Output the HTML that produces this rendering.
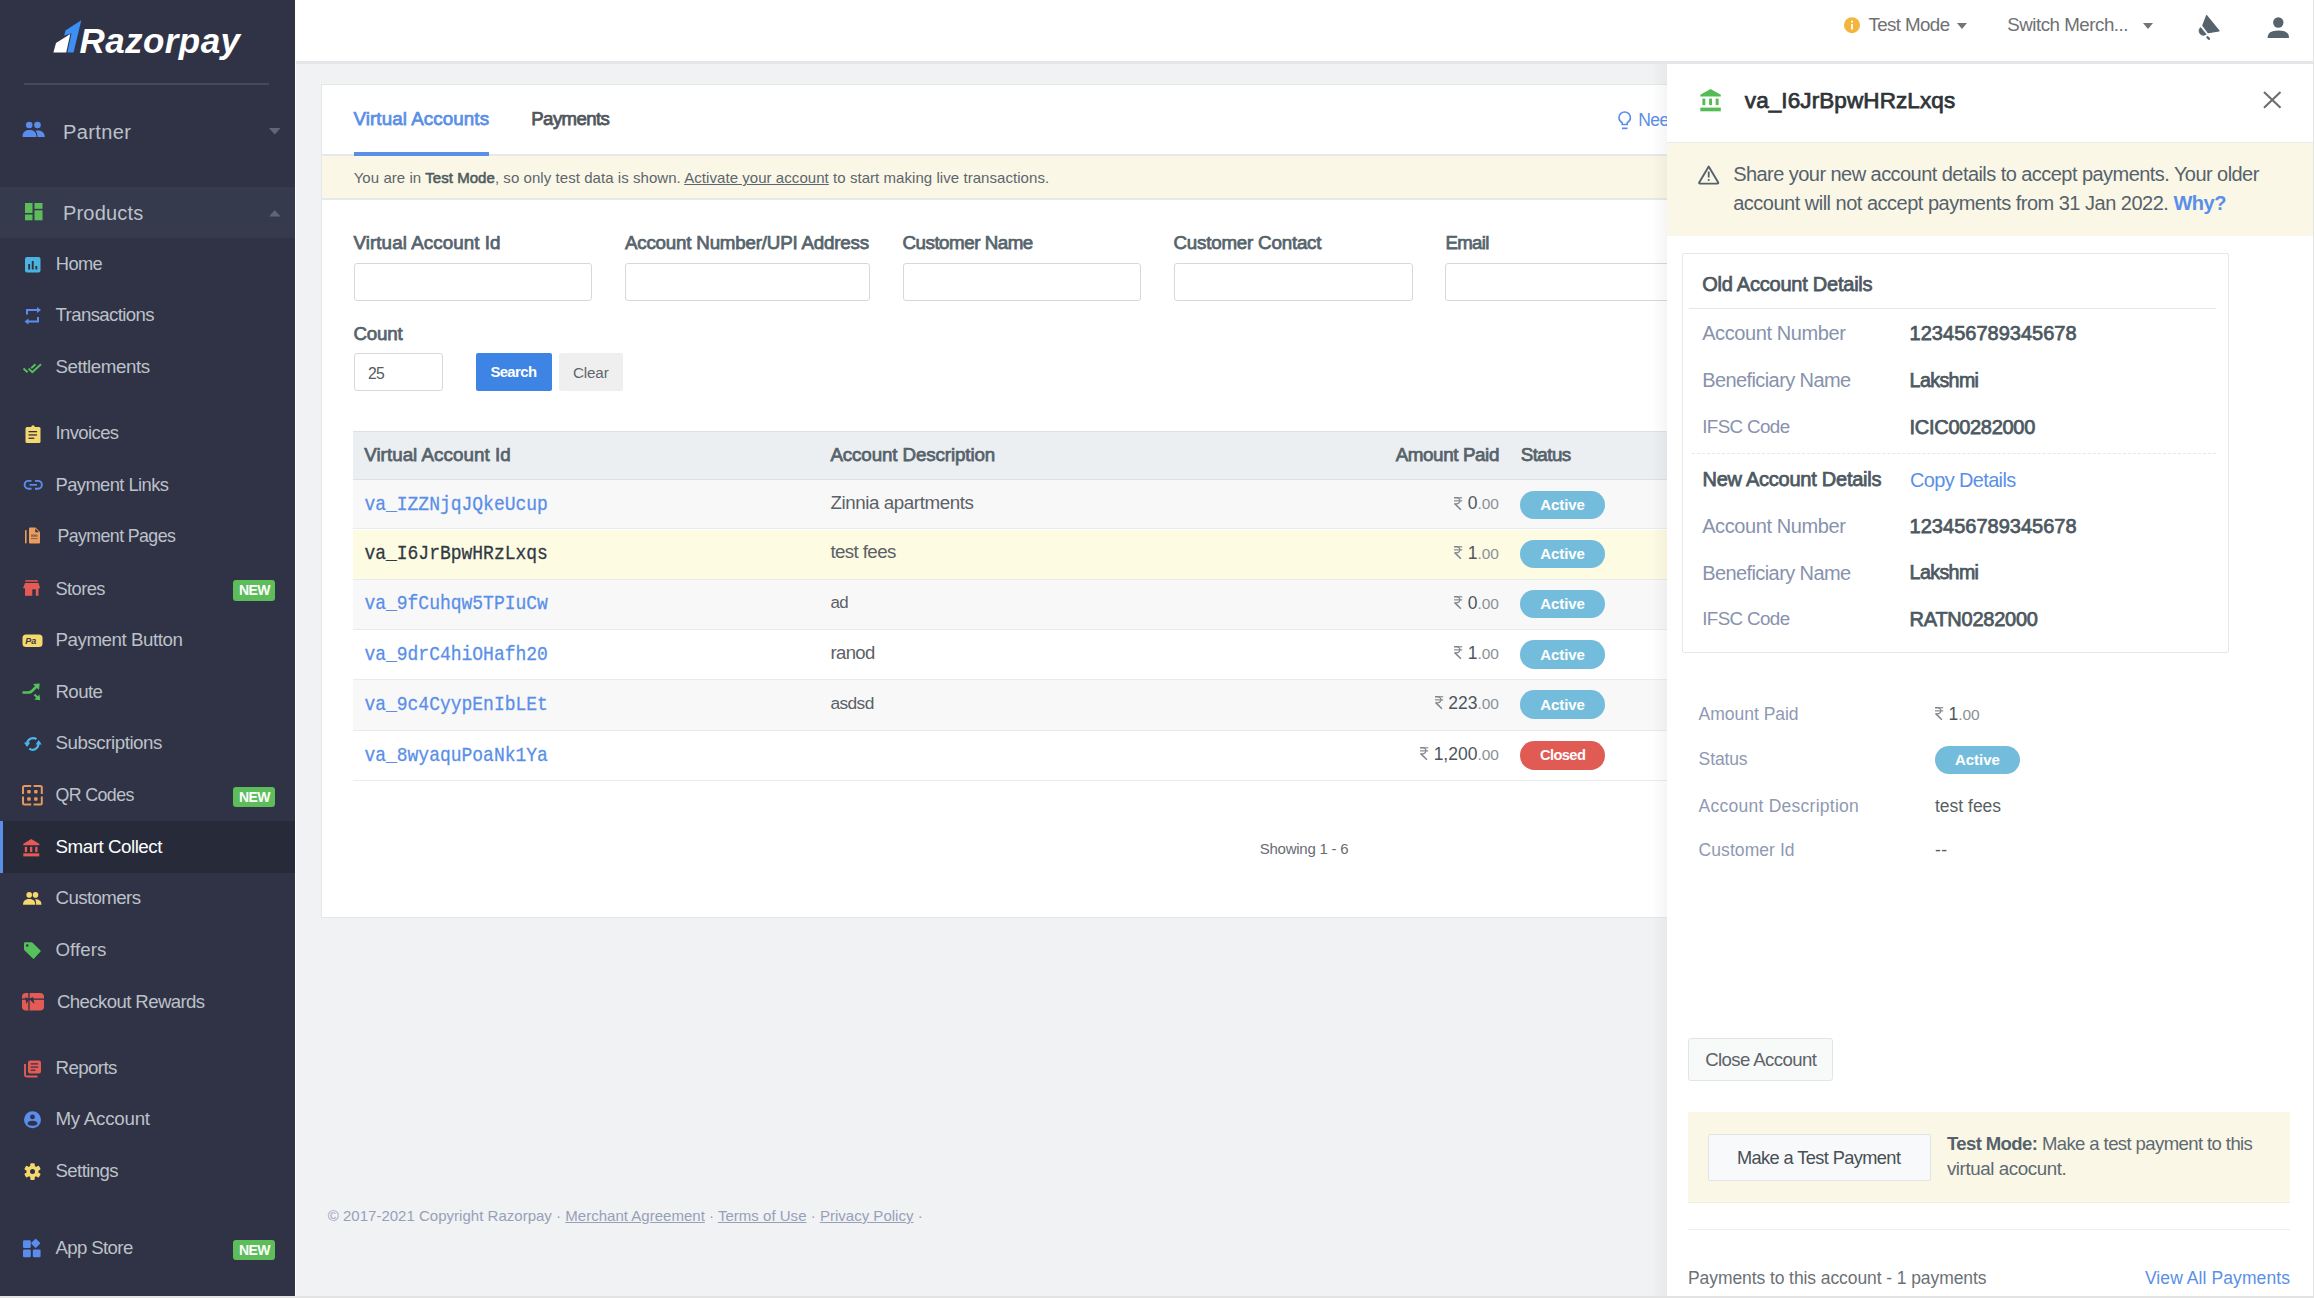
<!DOCTYPE html>
<html><head><meta charset="utf-8"><title>Razorpay Smart Collect</title>
<style>
html,body{margin:0;padding:0}
body{width:2314px;height:1298px;overflow:hidden;position:relative;background:#f0f2f4;font-family:"Liberation Sans",sans-serif}
div,span{box-sizing:border-box}
svg{overflow:visible}
</style></head><body>
<div style="position:absolute;left:0px;top:0px;width:295px;height:1298px;background:#2f3345;"></div>
<div style="position:absolute;left:295px;top:0px;width:1px;height:1298px;background:#ffffff;"></div>
<svg style="position:absolute;left:0px;top:0px" width="295" height="70" viewBox="0 0 295 70"><polygon points="53.4,52.6 56,43 70.3,34 66.2,52.6" fill="#ffffff"/><polygon points="64.2,35.7 65.4,30.4 81.3,20.2 73.6,52.6 67.3,52.6 71.5,33.2" fill="#3b8ff5"/></svg>
<div id="t0" style="position:absolute;left:79.5px;top:22.77px;font-family:'Liberation Sans', sans-serif;font-size:35px;line-height:35px;font-weight:700;color:#ffffff;white-space:nowrap;letter-spacing:0.420px;font-style:italic;"><span id="s0">Razorpay</span></div>
<div style="position:absolute;left:24px;top:83px;width:245px;height:2px;background:#444a5c;"></div>
<svg style="position:absolute;left:22px;top:121px" width="24" height="17" viewBox="0 0 24 17"><circle cx="7.2" cy="4" r="3.3" fill="#5a8dee"/><circle cx="15.5" cy="4" r="3.3" fill="#5a8dee"/><path d="M0.5 16 C0.5 10.5 4 9 7.5 9 C11 9 14.5 10.5 14.5 16 Z" fill="#5a8dee"/><path d="M15.5 16 C15.5 13 14.8 11.2 13.5 9.8 C17.5 9 22.8 10.5 22.8 16 Z" fill="#5a8dee"/></svg>
<div id="t1" style="position:absolute;left:62.9px;top:121.97px;font-family:'Liberation Sans', sans-serif;font-size:20px;line-height:20px;font-weight:400;color:#bdc1c9;white-space:nowrap;letter-spacing:0.401px;"><span id="s1">Partner</span></div>
<svg style="position:absolute;left:269px;top:128px" width="12" height="7" viewBox="0 0 12 7"><polygon points="0,0 11.5,0 5.75,6.5" fill="#5e6873"/></svg>
<div style="position:absolute;left:0px;top:186.5px;width:295px;height:51.5px;background:#353a4c;"></div>
<svg style="position:absolute;left:25px;top:203px" width="18" height="18" viewBox="0 0 18 18"><rect x="0" y="0" width="7.5" height="10" fill="#5cbd5a"/><rect x="0" y="11.5" width="7.5" height="5.8" fill="#5cbd5a"/><rect x="9.5" y="0" width="8" height="5.8" fill="#5cbd5a"/><rect x="9.5" y="7.3" width="8" height="10" fill="#5cbd5a"/></svg>
<div id="t2" style="position:absolute;left:62.9px;top:203.37px;font-family:'Liberation Sans', sans-serif;font-size:20px;line-height:20px;font-weight:400;color:#bdc1c9;white-space:nowrap;letter-spacing:0.209px;"><span id="s2">Products</span></div>
<svg style="position:absolute;left:269px;top:210px" width="12" height="7" viewBox="0 0 12 7"><polygon points="0,6.5 11.5,6.5 5.75,0" fill="#5e6873"/></svg>
<div style="position:absolute;left:0px;top:821.2px;width:295px;height:51.8px;background:#262a39;"></div>
<div style="position:absolute;left:0px;top:821.2px;width:3px;height:51.8px;background:#5a8fe8;"></div>
<svg style="position:absolute;left:25px;top:256.7px" width="16" height="16" viewBox="0 0 16 16"><rect x="0" y="0" width="15.5" height="15.5" rx="2" fill="#4bb3e0"/><rect x="3.2" y="7" width="1.9" height="5.5" fill="#2f3345"/><rect x="6.8" y="4" width="1.9" height="8.5" fill="#2f3345"/><rect x="10.4" y="9" width="1.9" height="3.5" fill="#2f3345"/></svg>
<div id="t3" style="position:absolute;left:55.8px;top:255.21px;font-family:'Liberation Sans', sans-serif;font-size:18.29px;line-height:18.29px;font-weight:400;color:#bdc1c9;white-space:nowrap;letter-spacing:-0.600px;"><span id="s3">Home</span></div>
<svg style="position:absolute;left:25px;top:308.1px" width="17" height="16" viewBox="0 0 17 16"><path d="M2 6.5 V2 H12.5" stroke="#5a8dee" stroke-width="2" fill="none"/><polygon points="12,-1 16,2 12,5" fill="#5a8dee"/><path d="M13 9 V13.5 H3" stroke="#5a8dee" stroke-width="2" fill="none"/><polygon points="3.5,10.5 -0.5,13.5 3.5,16.5" fill="#5a8dee"/></svg>
<div id="t4" style="position:absolute;left:55.5px;top:306.35px;font-family:'Liberation Sans', sans-serif;font-size:18.6px;line-height:18.6px;font-weight:400;color:#bdc1c9;white-space:nowrap;letter-spacing:-0.600px;"><span id="s4">Transactions</span></div>
<svg style="position:absolute;left:23px;top:363.1px" width="19" height="12" viewBox="0 0 19 12"><path d="M0.5 5.5 L4.6 9.2" stroke="#55c15a" stroke-width="1.9" fill="none"/><path d="M5.6 5.5 L9.3 9.2 L18 1.2" stroke="#55c15a" stroke-width="1.9" fill="none"/><path d="M8.2 5.2 L12.5 1.2" stroke="#55c15a" stroke-width="1.9" fill="none"/></svg>
<div id="t5" style="position:absolute;left:55.5px;top:358.22px;font-family:'Liberation Sans', sans-serif;font-size:18.75px;line-height:18.75px;font-weight:400;color:#bdc1c9;white-space:nowrap;letter-spacing:-0.442px;"><span id="s5">Settlements</span></div>
<svg style="position:absolute;left:25px;top:424.6px" width="17" height="18" viewBox="0 0 17 18"><rect x="0.5" y="2" width="15" height="16" rx="1.5" fill="#f5d86e"/><circle cx="8" cy="2" r="1.8" fill="#f5d86e"/><rect x="3.5" y="6" width="8.5" height="1.3" fill="#2f3345"/><rect x="3.5" y="9.3" width="8.5" height="1.3" fill="#2f3345"/><rect x="3.5" y="12.6" width="5.8" height="1.3" fill="#2f3345"/></svg>
<div id="t6" style="position:absolute;left:55.5px;top:423.95px;font-family:'Liberation Sans', sans-serif;font-size:18.48px;line-height:18.48px;font-weight:400;color:#bdc1c9;white-space:nowrap;letter-spacing:-0.600px;"><span id="s6">Invoices</span></div>
<svg style="position:absolute;left:24px;top:480.4px" width="19" height="11" viewBox="0 0 19 11"><path d="M7.5 0.9 H4.5 A3.9 3.9 0 0 0 4.5 8.7 H7.5 M11 0.9 H14 A3.9 3.9 0 0 1 14 8.7 H11" stroke="#5a8dee" stroke-width="1.9" fill="none"/><rect x="5.5" y="4" width="7.5" height="1.7" fill="#5a8dee"/></svg>
<div id="t7" style="position:absolute;left:55.5px;top:475.82px;font-family:'Liberation Sans', sans-serif;font-size:18.4px;line-height:18.4px;font-weight:400;color:#bdc1c9;white-space:nowrap;letter-spacing:-0.600px;"><span id="s7">Payment Links</span></div>
<svg style="position:absolute;left:25px;top:526.6px" width="17" height="18" viewBox="0 0 17 18"><rect x="0" y="3" width="1.6" height="13.5" rx="0.7" fill="#eb9c5d"/><path d="M4 1.5 Q4 0.5 5 0.5 H10.5 L15 5 V15.5 Q15 16.5 14 16.5 H5 Q4 16.5 4 15.5 Z" fill="#eb9c5d"/><polygon points="10.3,1.5 14,5.2 10.3,5.2" fill="#2f3345"/><rect x="6" y="7.5" width="6.5" height="2.3" fill="#8a6a55"/><rect x="6" y="11" width="6.5" height="1.1" fill="#8a6a55"/></svg>
<div id="t8" style="position:absolute;left:57.5px;top:528.03px;font-family:'Liberation Sans', sans-serif;font-size:17.8px;line-height:17.8px;font-weight:400;color:#bdc1c9;white-space:nowrap;letter-spacing:-0.600px;"><span id="s8">Payment Pages</span></div>
<svg style="position:absolute;left:23px;top:580.1px" width="19" height="17" viewBox="0 0 19 17"><rect x="2.3" y="0" width="12.5" height="1.8" fill="#c9524e"/><polygon points="2,3 15.5,3 17.2,8.3 0,8.3" fill="#e45a54"/><rect x="2" y="8" width="13.5" height="7.8" fill="#e45a54"/><rect x="9.3" y="9.3" width="3.5" height="6.8" fill="#2f3345"/></svg>
<div id="t9" style="position:absolute;left:55.5px;top:579.61px;font-family:'Liberation Sans', sans-serif;font-size:18.3px;line-height:18.3px;font-weight:400;color:#bdc1c9;white-space:nowrap;letter-spacing:-0.600px;"><span id="s9">Stores</span></div>
<div style="position:absolute;left:233.2px;top:580.1px;width:42.3px;height:20.5px;background:#5cbd5a;border-radius:3px;"></div>
<div id="t10" style="position:absolute;left:-145.65px;width:800px;text-align:center;top:583.45px;font-family:'Liberation Sans', sans-serif;font-size:14px;line-height:14px;font-weight:700;color:#ffffff;white-space:nowrap;letter-spacing:-0.586px;"><span id="s10">NEW</span></div>
<svg style="position:absolute;left:22px;top:633.9px" width="21" height="14" viewBox="0 0 21 14"><rect x="0.5" y="0.5" width="20" height="12.5" rx="3.5" fill="#f5d86e"/><text x="3.3" y="10" font-family="Liberation Sans" font-size="9" font-weight="700" font-style="italic" fill="#3a3a3a">Pa</text></svg>
<div id="t11" style="position:absolute;left:55.5px;top:630.52px;font-family:'Liberation Sans', sans-serif;font-size:18.75px;line-height:18.75px;font-weight:400;color:#bdc1c9;white-space:nowrap;letter-spacing:-0.456px;"><span id="s11">Payment Button</span></div>
<svg style="position:absolute;left:22px;top:683.5px" width="20" height="19" viewBox="0 0 20 19"><path d="M0.5 8.5 H6.5 Q8.5 8.5 10 7 L15.5 1.5" stroke="#55c15a" stroke-width="2.6" fill="none"/><polygon points="11,0 17.7,-0.5 17,6" fill="#55c15a"/><path d="M12.5 10.5 L15.5 13.5" stroke="#55c15a" stroke-width="2.2" fill="none"/><polygon points="12.3,15.5 18.2,16.3 17.5,10.5" fill="#55c15a"/></svg>
<div id="t12" style="position:absolute;left:55.5px;top:682.70px;font-family:'Liberation Sans', sans-serif;font-size:18.66px;line-height:18.66px;font-weight:400;color:#bdc1c9;white-space:nowrap;letter-spacing:-0.600px;"><span id="s12">Route</span></div>
<svg style="position:absolute;left:23.7px;top:737.1px" width="18" height="14" viewBox="0 0 18 14"><path d="M3.2 7.2 A5.9 5.9 0 0 1 12.5 2.2" stroke="#4cb5e6" stroke-width="2.2" fill="none"/><polygon points="0,5.6 6.2,5.6 3.1,10" fill="#4cb5e6"/><path d="M14.5 6.4 A5.9 5.9 0 0 1 5.2 11.6" stroke="#4cb5e6" stroke-width="2.2" fill="none"/><polygon points="11.6,7.6 17.7,7.6 14.6,3" fill="#4cb5e6"/></svg>
<div id="t13" style="position:absolute;left:55.5px;top:734.42px;font-family:'Liberation Sans', sans-serif;font-size:18.75px;line-height:18.75px;font-weight:400;color:#bdc1c9;white-space:nowrap;letter-spacing:-0.472px;"><span id="s13">Subscriptions</span></div>
<svg style="position:absolute;left:22px;top:785.3px" width="21" height="21" viewBox="0 0 21 21"><path d="M1 9 V2.5 Q1 1 2.5 1 H9.2 M11.6 1 H18.3 Q19.8 1 19.8 2.5 V9 M19.8 11.5 V18 Q19.8 19.5 18.3 19.5 H11.6 M9.2 19.5 H2.5 Q1 19.5 1 18 V11.5" stroke="#e4985e" stroke-width="2" fill="none"/><rect x="5.2" y="4.9" width="3.5" height="3.5" rx="0.8" fill="#e4985e"/><rect x="12.1" y="4.9" width="3.5" height="3.5" rx="0.8" fill="#e4985e"/><rect x="5.2" y="12.2" width="3.5" height="3.5" rx="0.8" fill="#e4985e"/><rect x="12.1" y="12.2" width="3.5" height="3.5" rx="0.8" fill="#e4985e"/></svg>
<div id="t14" style="position:absolute;left:55.5px;top:786.73px;font-family:'Liberation Sans', sans-serif;font-size:17.8px;line-height:17.8px;font-weight:400;color:#bdc1c9;white-space:nowrap;letter-spacing:-0.600px;"><span id="s14">QR Codes</span></div>
<div style="position:absolute;left:233.2px;top:786.8px;width:42.3px;height:20.5px;background:#5cbd5a;border-radius:3px;"></div>
<div id="t15" style="position:absolute;left:-145.65px;width:800px;text-align:center;top:790.15px;font-family:'Liberation Sans', sans-serif;font-size:14px;line-height:14px;font-weight:700;color:#ffffff;white-space:nowrap;letter-spacing:-0.586px;"><span id="s15">NEW</span></div>
<svg style="position:absolute;left:23px;top:838.5px" width="18" height="19" viewBox="0 0 18 19"><polygon points="0.3,4.8 8.2,0 16.3,4.8 16.3,6.2 0.3,6.2" fill="#e45a54"/><rect x="1.8" y="7.8" width="2.3" height="5.3" fill="#e45a54"/><rect x="7" y="7.8" width="2.3" height="5.3" fill="#e45a54"/><rect x="12.2" y="7.8" width="2.3" height="5.3" fill="#e45a54"/><rect x="0.3" y="14.3" width="16" height="3.1" fill="#e45a54"/></svg>
<div id="t16" style="position:absolute;left:55.5px;top:837.62px;font-family:'Liberation Sans', sans-serif;font-size:18.75px;line-height:18.75px;font-weight:400;color:#ffffff;white-space:nowrap;letter-spacing:-0.469px;"><span id="s16">Smart Collect</span></div>
<svg style="position:absolute;left:23px;top:891.7px" width="20" height="14" viewBox="0 0 20 14"><circle cx="6.2" cy="2.9" r="2.8" fill="#f5d86e"/><circle cx="12.5" cy="2.9" r="2.8" fill="#f5d86e"/><path d="M0 12.8 C0 8.5 3 7 6.2 7 C9.5 7 12.3 8.5 12.3 12.8 Z" fill="#f5d86e"/><path d="M13.2 12.8 C13.2 10.5 12.8 8.5 12 7.3 C15.5 7.3 18.5 8.5 18.5 12.8 Z" fill="#f5d86e"/></svg>
<div id="t17" style="position:absolute;left:55.5px;top:888.87px;font-family:'Liberation Sans', sans-serif;font-size:18.7px;line-height:18.7px;font-weight:400;color:#bdc1c9;white-space:nowrap;letter-spacing:-0.600px;"><span id="s17">Customers</span></div>
<svg style="position:absolute;left:23.9px;top:941.8px" width="18" height="18" viewBox="0 0 18 18"><path d="M1.3 0.3 H7.6 Q8.3 0.3 8.9 0.9 L16.5 8.4 Q17.1 9 16.5 9.6 L10.1 16.6 Q9.5 17.2 8.9 16.6 L0.6 8.4 Q0 7.8 0 7 V1.6 Q0 0.3 1.3 0.3 Z" fill="#55c15a"/><circle cx="3.2" cy="3.4" r="1.25" fill="#2f3345"/></svg>
<div id="t18" style="position:absolute;left:55.5px;top:940.82px;font-family:'Liberation Sans', sans-serif;font-size:18.75px;line-height:18.75px;font-weight:400;color:#bdc1c9;white-space:nowrap;letter-spacing:0.016px;"><span id="s18">Offers</span></div>
<svg style="position:absolute;left:22px;top:993.4px" width="22" height="18" viewBox="0 0 22 18"><rect x="0" y="0" width="22" height="17.5" rx="4" fill="#e45a54"/><rect x="6.3" y="0" width="1.3" height="17.5" fill="#2f3345"/><rect x="0" y="5.5" width="22" height="1.3" fill="#2f3345"/><path d="M7 6 L3 4 L4.5 11 Z M7 6 L11 4 L12.5 11 Z" fill="#2f3345"/></svg>
<div id="t19" style="position:absolute;left:57.0px;top:992.65px;font-family:'Liberation Sans', sans-serif;font-size:18.6px;line-height:18.6px;font-weight:400;color:#bdc1c9;white-space:nowrap;letter-spacing:-0.600px;"><span id="s19">Checkout Rewards</span></div>
<svg style="position:absolute;left:24px;top:1059.6px" width="18" height="18" viewBox="0 0 18 18"><path d="M1 4 V15 Q1 16.5 2.5 16.5 H13.5" stroke="#e45a54" stroke-width="1.9" fill="none"/><rect x="4" y="0.5" width="13" height="13" rx="2" fill="#e45a54"/><rect x="6.6" y="3.3" width="7.5" height="1.2" fill="#2f3345"/><rect x="6.6" y="6.5" width="7.5" height="1.2" fill="#2f3345"/><rect x="6.6" y="9.6" width="4.8" height="1.2" fill="#2f3345"/></svg>
<div id="t20" style="position:absolute;left:55.5px;top:1058.74px;font-family:'Liberation Sans', sans-serif;font-size:18.73px;line-height:18.73px;font-weight:400;color:#bdc1c9;white-space:nowrap;letter-spacing:-0.600px;"><span id="s20">Reports</span></div>
<svg style="position:absolute;left:24px;top:1111.2px" width="18" height="18" viewBox="0 0 18 18"><circle cx="8.5" cy="8.7" r="8.5" fill="#5a8dee"/><circle cx="8.5" cy="5.9" r="2.4" fill="#2f3345"/><ellipse cx="8.5" cy="12.3" rx="4.8" ry="2.5" fill="#2f3345"/></svg>
<div id="t21" style="position:absolute;left:55.5px;top:1110.32px;font-family:'Liberation Sans', sans-serif;font-size:18.75px;line-height:18.75px;font-weight:400;color:#bdc1c9;white-space:nowrap;letter-spacing:-0.269px;"><span id="s21">My Account</span></div>
<svg style="position:absolute;left:24px;top:1162.9px" width="18" height="18" viewBox="0 0 18 18"><g fill="#f5d86e"><circle cx="8.5" cy="8.6" r="6"/><rect x="6.3" y="0.2" width="4.4" height="4" rx="1"/><rect x="6.3" y="13" width="4.4" height="4" rx="1"/><rect x="6.3" y="0.2" width="4.4" height="4" rx="1" transform="rotate(60 8.5 8.6)"/><rect x="6.3" y="0.2" width="4.4" height="4" rx="1" transform="rotate(120 8.5 8.6)"/><rect x="6.3" y="0.2" width="4.4" height="4" rx="1" transform="rotate(240 8.5 8.6)"/><rect x="6.3" y="0.2" width="4.4" height="4" rx="1" transform="rotate(300 8.5 8.6)"/></g><circle cx="8.5" cy="8.6" r="2.5" fill="#2f3345"/></svg>
<div id="t22" style="position:absolute;left:55.5px;top:1162.13px;font-family:'Liberation Sans', sans-serif;font-size:18.63px;line-height:18.63px;font-weight:400;color:#bdc1c9;white-space:nowrap;letter-spacing:-0.600px;"><span id="s22">Settings</span></div>
<svg style="position:absolute;left:23px;top:1239.3px" width="19" height="19" viewBox="0 0 19 19"><rect x="0" y="1.2" width="7.8" height="7.8" rx="1.3" fill="#5a8dee"/><rect x="9" y="0.8" width="6.8" height="6.8" rx="1" transform="rotate(45 12.4 4.6)" fill="#5a8dee"/><rect x="0" y="10.5" width="7.8" height="7.8" rx="1.3" fill="#5a8dee"/><rect x="9.8" y="10.5" width="7.8" height="7.8" rx="1.3" fill="#5a8dee"/></svg>
<div id="t23" style="position:absolute;left:55.5px;top:1239.08px;font-family:'Liberation Sans', sans-serif;font-size:18.57px;line-height:18.57px;font-weight:400;color:#bdc1c9;white-space:nowrap;letter-spacing:-0.600px;"><span id="s23">App Store</span></div>
<div style="position:absolute;left:233.2px;top:1239.8px;width:42.3px;height:20.5px;background:#5cbd5a;border-radius:3px;"></div>
<div id="t24" style="position:absolute;left:-145.65px;width:800px;text-align:center;top:1243.15px;font-family:'Liberation Sans', sans-serif;font-size:14px;line-height:14px;font-weight:700;color:#ffffff;white-space:nowrap;letter-spacing:-0.586px;"><span id="s24">NEW</span></div>
<div style="position:absolute;left:296px;top:0px;width:2018px;height:61px;background:#ffffff;"></div>
<div style="position:absolute;left:296px;top:61px;width:2018px;height:2.5px;background:#e4e6e9;"></div>
<svg style="position:absolute;left:1844px;top:16.5px" width="17" height="17" viewBox="0 0 17 17"><circle cx="8" cy="8.2" r="8" fill="#f2b63c"/><rect x="7.1" y="7" width="1.8" height="5.5" fill="#ffffff"/><circle cx="8" cy="4.7" r="1.1" fill="#ffffff"/></svg>
<div id="t25" style="position:absolute;left:1868.4px;top:16.12px;font-family:'Liberation Sans', sans-serif;font-size:18.75px;line-height:18.75px;font-weight:400;color:#6f7173;white-space:nowrap;letter-spacing:-0.600px;"><span id="s25">Test Mode</span></div>
<svg style="position:absolute;left:1957px;top:23px" width="11" height="7" viewBox="0 0 11 7"><polygon points="0,0 10,0 5,6" fill="#727476"/></svg>
<div id="t26" style="position:absolute;left:2007.3px;top:16.12px;font-family:'Liberation Sans', sans-serif;font-size:18.75px;line-height:18.75px;font-weight:400;color:#6f7173;white-space:nowrap;letter-spacing:-0.497px;"><span id="s26">Switch Merch...</span></div>
<svg style="position:absolute;left:2142.5px;top:23px" width="11" height="7" viewBox="0 0 11 7"><polygon points="0,0 10,0 5,6" fill="#727476"/></svg>
<svg style="position:absolute;left:2196px;top:14px" width="25" height="27" viewBox="0 0 25 27"><path d="M10.6 1.7 L23 16.8 L12.2 18.7 L6.9 11.6 Z" fill="#56636c" stroke="#56636c" stroke-width="1.3" stroke-linejoin="round"/><path d="M4.6 13.6 A4.2 4.2 0 0 0 10.2 20.2 Z" fill="#56636c" stroke="#56636c" stroke-width="0.8" stroke-linejoin="round"/><path d="M11.5 23.3 L12.9 24.8" stroke="#56636c" stroke-width="2.4" stroke-linecap="round"/></svg>
<svg style="position:absolute;left:2267px;top:16px" width="23" height="23" viewBox="0 0 23 23"><circle cx="11.3" cy="6.5" r="5.2" fill="#56636c"/><path d="M0.5 21.5 Q0.5 14.5 11.3 14.5 Q22 14.5 22 21.5 Q22 22 21.3 22 H1.2 Q0.5 22 0.5 21.5 Z" fill="#56636c"/></svg>
<div style="position:absolute;left:321px;top:84px;width:1400px;height:834px;background:#ffffff;border:1.5px solid #e2e7e8;"></div>
<div id="t27" style="position:absolute;left:353.5px;top:110.32px;font-family:'Liberation Sans', sans-serif;font-size:18.75px;line-height:18.75px;font-weight:400;color:#5a8fe8;white-space:nowrap;letter-spacing:0.093px;-webkit-text-stroke:0.75px currentColor;"><span id="s27">Virtual Accounts</span></div>
<div id="t28" style="position:absolute;left:531.3px;top:110.42px;font-family:'Liberation Sans', sans-serif;font-size:18.64px;line-height:18.64px;font-weight:400;color:#50565b;white-space:nowrap;letter-spacing:-0.600px;-webkit-text-stroke:0.75px currentColor;"><span id="s28">Payments</span></div>
<svg style="position:absolute;left:1617.5px;top:111.5px" width="15" height="19" viewBox="0 0 15 19"><path d="M4.2 12.5 V10.6 Q1 8.8 1 5.7 A5.7 5.7 0 0 1 12.4 5.7 Q12.4 8.8 9.2 10.6 V12.5 Z" fill="none" stroke="#5a8fe8" stroke-width="1.6"/><rect x="4" y="15.5" width="5.5" height="1.7" fill="#5a8fe8"/></svg>
<div id="t29" style="position:absolute;left:1638.2px;top:111.78px;font-family:'Liberation Sans', sans-serif;font-size:17.5px;line-height:17.5px;font-weight:400;color:#5a8fe8;white-space:nowrap;letter-spacing:-0.497px;"><span id="s29">Need help?</span></div>
<div style="position:absolute;left:322px;top:154px;width:1398px;height:46px;background:#faf7e6;border-top:2px solid #e6e9ea;border-bottom:2px solid #e6e9ea;"></div>
<div style="position:absolute;left:353.5px;top:151.5px;width:135.5px;height:4.4px;background:#5a8fe8;"></div>
<div id="t30" style="position:absolute;left:353.7px;top:170.00px;font-family:'Liberation Sans', sans-serif;font-size:15px;line-height:15px;font-weight:400;color:#5c666d;white-space:nowrap;letter-spacing:0.056px;"><span id="s30">You are in <span style="color:#4f5a61;-webkit-text-stroke:0.55px #4f5a61">Test Mode</span>, so only test data is shown. <span style="text-decoration:underline">Activate your account</span> to start making live transactions.</span></div>
<div id="t31" style="position:absolute;left:353.5px;top:234.22px;font-family:'Liberation Sans', sans-serif;font-size:18.75px;line-height:18.75px;font-weight:400;color:#56646c;white-space:nowrap;letter-spacing:0.084px;-webkit-text-stroke:0.75px currentColor;"><span id="s31">Virtual Account Id</span></div>
<div style="position:absolute;left:353.5px;top:263.1px;width:238.3px;height:38.2px;background:#ffffff;border:1.5px solid #d3dadf;border-radius:3px;"></div>
<div id="t32" style="position:absolute;left:624.9px;top:234.22px;font-family:'Liberation Sans', sans-serif;font-size:18.75px;line-height:18.75px;font-weight:400;color:#56646c;white-space:nowrap;letter-spacing:-0.195px;-webkit-text-stroke:0.75px currentColor;"><span id="s32">Account Number/UPI Address</span></div>
<div style="position:absolute;left:624.9px;top:263.1px;width:244.9px;height:38.2px;background:#ffffff;border:1.5px solid #d3dadf;border-radius:3px;"></div>
<div id="t33" style="position:absolute;left:902.5px;top:234.22px;font-family:'Liberation Sans', sans-serif;font-size:18.75px;line-height:18.75px;font-weight:400;color:#56646c;white-space:nowrap;letter-spacing:-0.483px;-webkit-text-stroke:0.75px currentColor;"><span id="s33">Customer Name</span></div>
<div style="position:absolute;left:902.5px;top:263.1px;width:238.4px;height:38.2px;background:#ffffff;border:1.5px solid #d3dadf;border-radius:3px;"></div>
<div id="t34" style="position:absolute;left:1173.5px;top:234.22px;font-family:'Liberation Sans', sans-serif;font-size:18.75px;line-height:18.75px;font-weight:400;color:#56646c;white-space:nowrap;letter-spacing:-0.207px;-webkit-text-stroke:0.75px currentColor;"><span id="s34">Customer Contact</span></div>
<div style="position:absolute;left:1173.5px;top:263.1px;width:239.1px;height:38.2px;background:#ffffff;border:1.5px solid #d3dadf;border-radius:3px;"></div>
<div id="t35" style="position:absolute;left:1445.4px;top:234.36px;font-family:'Liberation Sans', sans-serif;font-size:18.59px;line-height:18.59px;font-weight:400;color:#56646c;white-space:nowrap;letter-spacing:-0.600px;-webkit-text-stroke:0.75px currentColor;"><span id="s35">Email</span></div>
<div style="position:absolute;left:1445.4px;top:263.1px;width:239px;height:38.2px;background:#ffffff;border:1.5px solid #d3dadf;border-radius:3px;"></div>
<div id="t36" style="position:absolute;left:353.5px;top:324.52px;font-family:'Liberation Sans', sans-serif;font-size:18.75px;line-height:18.75px;font-weight:400;color:#56646c;white-space:nowrap;letter-spacing:-0.212px;-webkit-text-stroke:0.75px currentColor;"><span id="s36">Count</span></div>
<div style="position:absolute;left:353.5px;top:353.2px;width:89.6px;height:38.3px;background:#ffffff;border:1.5px solid #d3dadf;border-radius:3px;"></div>
<div id="t37" style="position:absolute;left:367.9px;top:365.56px;font-family:'Liberation Sans', sans-serif;font-size:15.75px;line-height:15.75px;font-weight:400;color:#555b60;white-space:nowrap;letter-spacing:-0.531px;"><span id="s37">25</span></div>
<div style="position:absolute;left:476px;top:353.2px;width:75.8px;height:38.3px;background:#3d84e5;border-radius:2px;"></div>
<div id="t38" style="position:absolute;left:490.4px;top:365.11px;font-family:'Liberation Sans', sans-serif;font-size:14.87px;line-height:14.87px;font-weight:700;color:#ffffff;white-space:nowrap;letter-spacing:-0.600px;"><span id="s38">Search</span></div>
<div style="position:absolute;left:558.7px;top:353.2px;width:64.3px;height:38.3px;background:#efefef;border-radius:2px;"></div>
<div id="t39" style="position:absolute;left:572.9px;top:364.79px;font-family:'Liberation Sans', sans-serif;font-size:15.25px;line-height:15.25px;font-weight:400;color:#5f676c;white-space:nowrap;letter-spacing:-0.138px;"><span id="s39">Clear</span></div>
<div style="position:absolute;left:353px;top:431px;width:1320px;height:49px;background:#eceff1;border-top:1px solid #dde1e4;border-bottom:1.5px solid #dde1e4;"></div>
<div id="t40" style="position:absolute;left:364.2px;top:446.22px;font-family:'Liberation Sans', sans-serif;font-size:18.75px;line-height:18.75px;font-weight:400;color:#56636b;white-space:nowrap;letter-spacing:0.048px;-webkit-text-stroke:0.75px currentColor;"><span id="s40">Virtual Account Id</span></div>
<div id="t41" style="position:absolute;left:830.4px;top:446.22px;font-family:'Liberation Sans', sans-serif;font-size:18.75px;line-height:18.75px;font-weight:400;color:#56636b;white-space:nowrap;letter-spacing:-0.108px;-webkit-text-stroke:0.75px currentColor;"><span id="s41">Account Description</span></div>
<div id="t42" style="position:absolute;right:815px;top:446.22px;font-family:'Liberation Sans', sans-serif;font-size:18.75px;line-height:18.75px;font-weight:400;color:#56636b;white-space:nowrap;letter-spacing:-0.366px;-webkit-text-stroke:0.75px currentColor;"><span id="s42">Amount Paid</span></div>
<div id="t43" style="position:absolute;left:1520.7px;top:446.22px;font-family:'Liberation Sans', sans-serif;font-size:18.75px;line-height:18.75px;font-weight:400;color:#56636b;white-space:nowrap;letter-spacing:-0.531px;-webkit-text-stroke:0.75px currentColor;"><span id="s43">Status</span></div>
<div style="position:absolute;left:353px;top:480.3px;width:1320px;height:49.19999999999999px;background:#f8f8f9;border-bottom:1px solid #e8ecee;"></div>
<div id="t44" style="position:absolute;left:364.4px;top:495.81px;font-family:'Liberation Mono', monospace;font-size:18px;line-height:18px;font-weight:400;color:#5a8fe8;white-space:nowrap;letter-spacing:-0.009px;transform:scaleY(1.08);transform-origin:0 80%;-webkit-text-stroke:0.25px currentColor;"><span id="s44">va_IZZNjqJQkeUcup</span></div>
<div id="t45" style="position:absolute;left:830.4px;top:493.72px;font-family:'Liberation Sans', sans-serif;font-size:18.75px;line-height:18.75px;font-weight:400;color:#5b6166;white-space:nowrap;letter-spacing:-0.411px;"><span id="s45">Zinnia apartments</span></div>
<div id="t46" style="position:absolute;right:815px;top:495.38px;font-family:'Liberation Sans', sans-serif;font-size:17.5px;line-height:17.5px;font-weight:400;color:#4e565c;white-space:nowrap;"><span id="s46"><svg width="8.4" height="12.8" viewBox="0 0 8.4 12.8" style="vertical-align:baseline;margin-right:5px;overflow:visible"><rect x="0" y="0.2" width="8.2" height="1.15" fill="#80878c"/><rect x="0" y="3.3" width="8.2" height="1.15" fill="#80878c"/><path d="M0 0.62 H2.2 C4.9 0.62 5.9 2.2 5.9 3.8 C5.9 5.6 4.4 6.9 2.2 6.9 H0.2" stroke="#80878c" stroke-width="1.2" fill="none"/><path d="M1 6.9 L6.9 12.8" stroke="#80878c" stroke-width="1.5" fill="none"/></svg>0<span style="font-size:15.5px;color:#8a9196">.00</span></span></div>
<div style="position:absolute;left:1520px;top:490.5px;width:85.2px;height:28.4px;background:#74bcdc;border-radius:14.2px;"></div>
<div id="t47" style="position:absolute;left:1162.6px;width:800px;text-align:center;top:496.70px;font-family:'Liberation Sans', sans-serif;font-size:15px;line-height:15px;font-weight:700;color:#ffffff;white-space:nowrap;letter-spacing:-0.066px;"><span id="s47">Active</span></div>
<div style="position:absolute;left:353px;top:529.5px;width:1320px;height:50.200000000000045px;background:#fefbe3;border-bottom:1px solid #e8ecee;"></div>
<div id="t48" style="position:absolute;left:364.4px;top:545.01px;font-family:'Liberation Mono', monospace;font-size:18px;line-height:18px;font-weight:400;color:#2f3a43;white-space:nowrap;letter-spacing:-0.009px;transform:scaleY(1.08);transform-origin:0 80%;-webkit-text-stroke:0.25px currentColor;"><span id="s48">va_I6JrBpwHRzLxqs</span></div>
<div id="t49" style="position:absolute;left:830.4px;top:542.94px;font-family:'Liberation Sans', sans-serif;font-size:18.73px;line-height:18.73px;font-weight:400;color:#5b6166;white-space:nowrap;letter-spacing:-0.600px;"><span id="s49">test fees</span></div>
<div id="t50" style="position:absolute;right:815px;top:544.58px;font-family:'Liberation Sans', sans-serif;font-size:17.5px;line-height:17.5px;font-weight:400;color:#4e565c;white-space:nowrap;"><span id="s50"><svg width="8.4" height="12.8" viewBox="0 0 8.4 12.8" style="vertical-align:baseline;margin-right:5px;overflow:visible"><rect x="0" y="0.2" width="8.2" height="1.15" fill="#80878c"/><rect x="0" y="3.3" width="8.2" height="1.15" fill="#80878c"/><path d="M0 0.62 H2.2 C4.9 0.62 5.9 2.2 5.9 3.8 C5.9 5.6 4.4 6.9 2.2 6.9 H0.2" stroke="#80878c" stroke-width="1.2" fill="none"/><path d="M1 6.9 L6.9 12.8" stroke="#80878c" stroke-width="1.5" fill="none"/></svg>1<span style="font-size:15.5px;color:#8a9196">.00</span></span></div>
<div style="position:absolute;left:1520px;top:539.7px;width:85.2px;height:28.4px;background:#74bcdc;border-radius:14.2px;"></div>
<div id="t51" style="position:absolute;left:1162.6px;width:800px;text-align:center;top:545.90px;font-family:'Liberation Sans', sans-serif;font-size:15px;line-height:15px;font-weight:700;color:#ffffff;white-space:nowrap;letter-spacing:-0.066px;"><span id="s51">Active</span></div>
<div style="position:absolute;left:353px;top:579.7px;width:1320px;height:50.5px;background:#f8f8f9;border-bottom:1px solid #e8ecee;"></div>
<div id="t52" style="position:absolute;left:364.4px;top:595.21px;font-family:'Liberation Mono', monospace;font-size:18px;line-height:18px;font-weight:400;color:#5a8fe8;white-space:nowrap;letter-spacing:-0.009px;transform:scaleY(1.08);transform-origin:0 80%;-webkit-text-stroke:0.25px currentColor;"><span id="s52">va_9fCuhqw5TPIuCw</span></div>
<div id="t53" style="position:absolute;left:830.4px;top:594.69px;font-family:'Liberation Sans', sans-serif;font-size:16.9px;line-height:16.9px;font-weight:400;color:#5b6166;white-space:nowrap;letter-spacing:-0.600px;"><span id="s53">ad</span></div>
<div id="t54" style="position:absolute;right:815px;top:594.78px;font-family:'Liberation Sans', sans-serif;font-size:17.5px;line-height:17.5px;font-weight:400;color:#4e565c;white-space:nowrap;"><span id="s54"><svg width="8.4" height="12.8" viewBox="0 0 8.4 12.8" style="vertical-align:baseline;margin-right:5px;overflow:visible"><rect x="0" y="0.2" width="8.2" height="1.15" fill="#80878c"/><rect x="0" y="3.3" width="8.2" height="1.15" fill="#80878c"/><path d="M0 0.62 H2.2 C4.9 0.62 5.9 2.2 5.9 3.8 C5.9 5.6 4.4 6.9 2.2 6.9 H0.2" stroke="#80878c" stroke-width="1.2" fill="none"/><path d="M1 6.9 L6.9 12.8" stroke="#80878c" stroke-width="1.5" fill="none"/></svg>0<span style="font-size:15.5px;color:#8a9196">.00</span></span></div>
<div style="position:absolute;left:1520px;top:589.9000000000001px;width:85.2px;height:28.4px;background:#74bcdc;border-radius:14.2px;"></div>
<div id="t55" style="position:absolute;left:1162.6px;width:800px;text-align:center;top:596.10px;font-family:'Liberation Sans', sans-serif;font-size:15px;line-height:15px;font-weight:700;color:#ffffff;white-space:nowrap;letter-spacing:-0.066px;"><span id="s55">Active</span></div>
<div style="position:absolute;left:353px;top:630.2px;width:1320px;height:49.89999999999998px;background:#ffffff;border-bottom:1px solid #e8ecee;"></div>
<div id="t56" style="position:absolute;left:364.4px;top:645.71px;font-family:'Liberation Mono', monospace;font-size:18px;line-height:18px;font-weight:400;color:#5a8fe8;white-space:nowrap;letter-spacing:-0.009px;transform:scaleY(1.08);transform-origin:0 80%;-webkit-text-stroke:0.25px currentColor;"><span id="s56">va_9drC4hiOHafh20</span></div>
<div id="t57" style="position:absolute;left:830.4px;top:643.81px;font-family:'Liberation Sans', sans-serif;font-size:18.53px;line-height:18.53px;font-weight:400;color:#5b6166;white-space:nowrap;letter-spacing:-0.600px;"><span id="s57">ranod</span></div>
<div id="t58" style="position:absolute;right:815px;top:645.28px;font-family:'Liberation Sans', sans-serif;font-size:17.5px;line-height:17.5px;font-weight:400;color:#4e565c;white-space:nowrap;"><span id="s58"><svg width="8.4" height="12.8" viewBox="0 0 8.4 12.8" style="vertical-align:baseline;margin-right:5px;overflow:visible"><rect x="0" y="0.2" width="8.2" height="1.15" fill="#80878c"/><rect x="0" y="3.3" width="8.2" height="1.15" fill="#80878c"/><path d="M0 0.62 H2.2 C4.9 0.62 5.9 2.2 5.9 3.8 C5.9 5.6 4.4 6.9 2.2 6.9 H0.2" stroke="#80878c" stroke-width="1.2" fill="none"/><path d="M1 6.9 L6.9 12.8" stroke="#80878c" stroke-width="1.5" fill="none"/></svg>1<span style="font-size:15.5px;color:#8a9196">.00</span></span></div>
<div style="position:absolute;left:1520px;top:640.4000000000001px;width:85.2px;height:28.4px;background:#74bcdc;border-radius:14.2px;"></div>
<div id="t59" style="position:absolute;left:1162.6px;width:800px;text-align:center;top:646.60px;font-family:'Liberation Sans', sans-serif;font-size:15px;line-height:15px;font-weight:700;color:#ffffff;white-space:nowrap;letter-spacing:-0.066px;"><span id="s59">Active</span></div>
<div style="position:absolute;left:353px;top:680.1px;width:1320px;height:51.0px;background:#f8f8f9;border-bottom:1px solid #e8ecee;"></div>
<div id="t60" style="position:absolute;left:364.4px;top:695.61px;font-family:'Liberation Mono', monospace;font-size:18px;line-height:18px;font-weight:400;color:#5a8fe8;white-space:nowrap;letter-spacing:-0.009px;transform:scaleY(1.08);transform-origin:0 80%;-webkit-text-stroke:0.25px currentColor;"><span id="s60">va_9c4CyypEnIbLEt</span></div>
<div id="t61" style="position:absolute;left:830.4px;top:694.68px;font-family:'Liberation Sans', sans-serif;font-size:17.38px;line-height:17.38px;font-weight:400;color:#5b6166;white-space:nowrap;letter-spacing:-0.600px;"><span id="s61">asdsd</span></div>
<div id="t62" style="position:absolute;right:815px;top:695.18px;font-family:'Liberation Sans', sans-serif;font-size:17.5px;line-height:17.5px;font-weight:400;color:#4e565c;white-space:nowrap;"><span id="s62"><svg width="8.4" height="12.8" viewBox="0 0 8.4 12.8" style="vertical-align:baseline;margin-right:5px;overflow:visible"><rect x="0" y="0.2" width="8.2" height="1.15" fill="#80878c"/><rect x="0" y="3.3" width="8.2" height="1.15" fill="#80878c"/><path d="M0 0.62 H2.2 C4.9 0.62 5.9 2.2 5.9 3.8 C5.9 5.6 4.4 6.9 2.2 6.9 H0.2" stroke="#80878c" stroke-width="1.2" fill="none"/><path d="M1 6.9 L6.9 12.8" stroke="#80878c" stroke-width="1.5" fill="none"/></svg>223<span style="font-size:15.5px;color:#8a9196">.00</span></span></div>
<div style="position:absolute;left:1520px;top:690.3000000000001px;width:85.2px;height:28.4px;background:#74bcdc;border-radius:14.2px;"></div>
<div id="t63" style="position:absolute;left:1162.6px;width:800px;text-align:center;top:696.50px;font-family:'Liberation Sans', sans-serif;font-size:15px;line-height:15px;font-weight:700;color:#ffffff;white-space:nowrap;letter-spacing:-0.066px;"><span id="s63">Active</span></div>
<div style="position:absolute;left:353px;top:731.1px;width:1320px;height:50.39999999999998px;background:#ffffff;border-bottom:1px solid #e8ecee;"></div>
<div id="t64" style="position:absolute;left:364.4px;top:746.61px;font-family:'Liberation Mono', monospace;font-size:18px;line-height:18px;font-weight:400;color:#5a8fe8;white-space:nowrap;letter-spacing:-0.009px;transform:scaleY(1.08);transform-origin:0 80%;-webkit-text-stroke:0.25px currentColor;"><span id="s64">va_8wyaquPoaNk1Ya</span></div>
<div id="t65" style="position:absolute;right:815px;top:746.18px;font-family:'Liberation Sans', sans-serif;font-size:17.5px;line-height:17.5px;font-weight:400;color:#4e565c;white-space:nowrap;"><span id="s65"><svg width="8.4" height="12.8" viewBox="0 0 8.4 12.8" style="vertical-align:baseline;margin-right:5px;overflow:visible"><rect x="0" y="0.2" width="8.2" height="1.15" fill="#80878c"/><rect x="0" y="3.3" width="8.2" height="1.15" fill="#80878c"/><path d="M0 0.62 H2.2 C4.9 0.62 5.9 2.2 5.9 3.8 C5.9 5.6 4.4 6.9 2.2 6.9 H0.2" stroke="#80878c" stroke-width="1.2" fill="none"/><path d="M1 6.9 L6.9 12.8" stroke="#80878c" stroke-width="1.5" fill="none"/></svg>1,200<span style="font-size:15.5px;color:#8a9196">.00</span></span></div>
<div style="position:absolute;left:1520px;top:741.3000000000001px;width:85.2px;height:28.4px;background:#e15b55;border-radius:14.2px;"></div>
<div id="t66" style="position:absolute;left:1162.6px;width:800px;text-align:center;top:747.75px;font-family:'Liberation Sans', sans-serif;font-size:14.7px;line-height:14.7px;font-weight:700;color:#ffffff;white-space:nowrap;letter-spacing:-0.600px;"><span id="s66">Closed</span></div>
<div id="t67" style="position:absolute;left:904px;width:800px;text-align:center;top:840.90px;font-family:'Liberation Sans', sans-serif;font-size:15px;line-height:15px;font-weight:400;color:#676d72;white-space:nowrap;letter-spacing:-0.245px;"><span id="s67">Showing 1 - 6</span></div>
<div id="t68" style="position:absolute;left:327.7px;top:1207.80px;font-family:'Liberation Sans', sans-serif;font-size:15px;line-height:15px;font-weight:400;color:#97a0b8;white-space:nowrap;letter-spacing:0.017px;"><span id="s68">© 2017-2021 Copyright Razorpay · <u>Merchant Agreement</u> · <u>Terms of Use</u> · <u>Privacy Policy</u> ·</span></div>
<div style="position:absolute;left:1651px;top:63.5px;width:16px;height:1233px;background:linear-gradient(to right, rgba(0,0,0,0), rgba(0,0,0,0.04));"></div>
<div style="position:absolute;left:1667px;top:63.5px;width:1646px;height:1233px;background:#ffffff;"></div>
<svg style="position:absolute;left:1700px;top:88.5px" width="22" height="23" viewBox="0 0 22 23"><polygon points="0.3,5.8 10.5,0 20.8,5.8 20.8,7.5 0.3,7.5" fill="#55bb55"/><rect x="2.4" y="9.6" width="2.9" height="6.5" fill="#55bb55"/><rect x="9.1" y="9.6" width="2.9" height="6.5" fill="#55bb55"/><rect x="15.7" y="9.6" width="2.9" height="6.5" fill="#55bb55"/><rect x="0.3" y="18.6" width="20.5" height="3.7" fill="#55bb55"/></svg>
<div id="t69" style="position:absolute;left:1744.8px;top:89.85px;font-family:'Liberation Sans', sans-serif;font-size:22.5px;line-height:22.5px;font-weight:400;color:#2f3438;white-space:nowrap;letter-spacing:0.098px;-webkit-text-stroke:0.75px currentColor;"><span id="s69">va_I6JrBpwHRzLxqs</span></div>
<svg style="position:absolute;left:2263px;top:91px" width="19" height="18" viewBox="0 0 19 18"><path d="M1 1 L17.5 16.8 M17.5 1 L1 16.8" stroke="#6a6f73" stroke-width="2.1" fill="none"/></svg>
<div style="position:absolute;left:1667px;top:141.5px;width:1646px;height:94px;background:#faf7e6;border-top:1.5px solid #e8eaeb;"></div>
<svg style="position:absolute;left:1697.5px;top:165px" width="22" height="20" viewBox="0 0 22 20"><path d="M10.7 1.5 L20.2 17.5 Q20.6 18.6 19.5 18.6 H1.9 Q0.8 18.6 1.2 17.5 Z" fill="none" stroke="#56626b" stroke-width="1.9" stroke-linejoin="round"/><rect x="9.8" y="6.5" width="1.8" height="6" fill="#56626b"/><circle cx="10.7" cy="15" r="1.05" fill="#56626b"/></svg>
<div id="t70" style="position:absolute;left:1733.2px;top:164.17px;font-family:'Liberation Sans', sans-serif;font-size:20px;line-height:20px;font-weight:400;color:#56626b;white-space:nowrap;letter-spacing:-0.551px;"><span id="s70">Share your new account details to accept payments. Your older</span></div>
<div id="t71" style="position:absolute;left:1733.2px;top:192.87px;font-family:'Liberation Sans', sans-serif;font-size:20px;line-height:20px;font-weight:400;color:#56626b;white-space:nowrap;letter-spacing:-0.501px;"><span id="s71">account will not accept payments from 31 Jan 2022. <b style="color:#5a8fe8">Why?</b></span></div>
<div style="position:absolute;left:1682.2px;top:252.6px;width:546.4px;height:400.5px;background:#ffffff;border:1.5px solid #e3e8eb;border-radius:2px;"></div>
<div id="t72" style="position:absolute;left:1702.2px;top:273.57px;font-family:'Liberation Sans', sans-serif;font-size:20px;line-height:20px;font-weight:400;color:#4d5961;white-space:nowrap;letter-spacing:-0.230px;-webkit-text-stroke:0.75px currentColor;"><span id="s72">Old Account Details</span></div>
<div style="position:absolute;left:1689.3px;top:307.6px;width:527px;height:1.5px;background:#e3e8eb;"></div>
<div id="t73" style="position:absolute;left:1702.2px;top:323.47px;font-family:'Liberation Sans', sans-serif;font-size:20px;line-height:20px;font-weight:400;color:#8792ad;white-space:nowrap;letter-spacing:-0.405px;"><span id="s73">Account Number</span></div>
<div id="t74" style="position:absolute;left:1909.6px;top:323.47px;font-family:'Liberation Sans', sans-serif;font-size:20px;line-height:20px;font-weight:400;color:#4d5961;white-space:nowrap;letter-spacing:0.010px;-webkit-text-stroke:0.75px currentColor;"><span id="s74">123456789345678</span></div>
<div id="t75" style="position:absolute;left:1702.2px;top:370.37px;font-family:'Liberation Sans', sans-serif;font-size:20px;line-height:20px;font-weight:400;color:#8792ad;white-space:nowrap;letter-spacing:-0.590px;"><span id="s75">Beneficiary Name</span></div>
<div id="t76" style="position:absolute;left:1909.6px;top:370.71px;font-family:'Liberation Sans', sans-serif;font-size:19.6px;line-height:19.6px;font-weight:400;color:#4d5961;white-space:nowrap;letter-spacing:-0.600px;-webkit-text-stroke:0.75px currentColor;"><span id="s76">Lakshmi</span></div>
<div id="t77" style="position:absolute;left:1702.2px;top:417.62px;font-family:'Liberation Sans', sans-serif;font-size:18.76px;line-height:18.76px;font-weight:400;color:#8792ad;white-space:nowrap;letter-spacing:-0.600px;"><span id="s77">IFSC Code</span></div>
<div id="t78" style="position:absolute;left:1909.6px;top:416.57px;font-family:'Liberation Sans', sans-serif;font-size:20px;line-height:20px;font-weight:400;color:#4d5961;white-space:nowrap;letter-spacing:-0.299px;-webkit-text-stroke:0.75px currentColor;"><span id="s78">ICIC00282000</span></div>
<div style="position:absolute;left:1691.9px;top:452.5px;width:524.6px;height:0;border-top:1.5px dashed #e3e8eb;"></div>
<div id="t79" style="position:absolute;left:1702.5px;top:469.17px;font-family:'Liberation Sans', sans-serif;font-size:20px;line-height:20px;font-weight:400;color:#4d5961;white-space:nowrap;letter-spacing:-0.246px;-webkit-text-stroke:0.75px currentColor;"><span id="s79">New Account Details</span></div>
<div id="t80" style="position:absolute;left:1909.9px;top:470.53px;font-family:'Liberation Sans', sans-serif;font-size:19.93px;line-height:19.93px;font-weight:400;color:#5a8fe8;white-space:nowrap;letter-spacing:-0.600px;"><span id="s80">Copy Details</span></div>
<div id="t81" style="position:absolute;left:1702.2px;top:515.97px;font-family:'Liberation Sans', sans-serif;font-size:20px;line-height:20px;font-weight:400;color:#8792ad;white-space:nowrap;letter-spacing:-0.405px;"><span id="s81">Account Number</span></div>
<div id="t82" style="position:absolute;left:1909.6px;top:515.97px;font-family:'Liberation Sans', sans-serif;font-size:20px;line-height:20px;font-weight:400;color:#4d5961;white-space:nowrap;letter-spacing:0.010px;-webkit-text-stroke:0.75px currentColor;"><span id="s82">123456789345678</span></div>
<div id="t83" style="position:absolute;left:1702.2px;top:563.07px;font-family:'Liberation Sans', sans-serif;font-size:20px;line-height:20px;font-weight:400;color:#8792ad;white-space:nowrap;letter-spacing:-0.590px;"><span id="s83">Beneficiary Name</span></div>
<div id="t84" style="position:absolute;left:1909.6px;top:563.41px;font-family:'Liberation Sans', sans-serif;font-size:19.6px;line-height:19.6px;font-weight:400;color:#4d5961;white-space:nowrap;letter-spacing:-0.600px;-webkit-text-stroke:0.75px currentColor;"><span id="s84">Lakshmi</span></div>
<div id="t85" style="position:absolute;left:1702.2px;top:610.22px;font-family:'Liberation Sans', sans-serif;font-size:18.76px;line-height:18.76px;font-weight:400;color:#8792ad;white-space:nowrap;letter-spacing:-0.600px;"><span id="s85">IFSC Code</span></div>
<div id="t86" style="position:absolute;left:1909.6px;top:609.17px;font-family:'Liberation Sans', sans-serif;font-size:20px;line-height:20px;font-weight:400;color:#4d5961;white-space:nowrap;letter-spacing:-0.253px;-webkit-text-stroke:0.75px currentColor;"><span id="s86">RATN0282000</span></div>
<div id="t87" style="position:absolute;left:1698.6px;top:705.78px;font-family:'Liberation Sans', sans-serif;font-size:17.5px;line-height:17.5px;font-weight:400;color:#8f99b3;white-space:nowrap;letter-spacing:-0.020px;"><span id="s87">Amount Paid</span></div>
<div id="t88" style="position:absolute;left:1935px;top:705.78px;font-family:'Liberation Sans', sans-serif;font-size:17.5px;line-height:17.5px;font-weight:400;color:#4e565c;white-space:nowrap;"><span id="s88"><svg width="8.4" height="12.8" viewBox="0 0 8.4 12.8" style="vertical-align:baseline;margin-right:5px;overflow:visible"><rect x="0" y="0.2" width="8.2" height="1.15" fill="#80878c"/><rect x="0" y="3.3" width="8.2" height="1.15" fill="#80878c"/><path d="M0 0.62 H2.2 C4.9 0.62 5.9 2.2 5.9 3.8 C5.9 5.6 4.4 6.9 2.2 6.9 H0.2" stroke="#80878c" stroke-width="1.2" fill="none"/><path d="M1 6.9 L6.9 12.8" stroke="#80878c" stroke-width="1.5" fill="none"/></svg>1<span style="font-size:15.5px;color:#8a9196">.00</span></span></div>
<div id="t89" style="position:absolute;left:1698.6px;top:750.68px;font-family:'Liberation Sans', sans-serif;font-size:17.5px;line-height:17.5px;font-weight:400;color:#8f99b3;white-space:nowrap;letter-spacing:-0.125px;"><span id="s89">Status</span></div>
<div style="position:absolute;left:1935px;top:746.3px;width:84.8px;height:27.7px;background:#74bcdc;border-radius:14px;"></div>
<div id="t90" style="position:absolute;left:1577.4px;width:800px;text-align:center;top:752.20px;font-family:'Liberation Sans', sans-serif;font-size:15px;line-height:15px;font-weight:700;color:#ffffff;white-space:nowrap;letter-spacing:-0.066px;"><span id="s90">Active</span></div>
<div id="t91" style="position:absolute;left:1698.6px;top:798.08px;font-family:'Liberation Sans', sans-serif;font-size:17.5px;line-height:17.5px;font-weight:400;color:#8f99b3;white-space:nowrap;letter-spacing:0.253px;"><span id="s91">Account Description</span></div>
<div id="t92" style="position:absolute;left:1935px;top:798.08px;font-family:'Liberation Sans', sans-serif;font-size:17.5px;line-height:17.5px;font-weight:400;color:#585f64;white-space:nowrap;letter-spacing:-0.007px;"><span id="s92">test fees</span></div>
<div id="t93" style="position:absolute;left:1698.6px;top:842.38px;font-family:'Liberation Sans', sans-serif;font-size:17.5px;line-height:17.5px;font-weight:400;color:#8f99b3;white-space:nowrap;letter-spacing:0.069px;"><span id="s93">Customer Id</span></div>
<div id="t94" style="position:absolute;left:1935px;top:842.38px;font-family:'Liberation Sans', sans-serif;font-size:17.5px;line-height:17.5px;font-weight:400;color:#585f64;white-space:nowrap;letter-spacing:0.344px;"><span id="s94">--</span></div>
<div style="position:absolute;left:1688.3px;top:1038.4px;width:145.2px;height:43.1px;background:#f8f9f9;border:1.5px solid #e0e5e7;border-radius:3px;"></div>
<div id="t95" style="position:absolute;left:1705.2px;top:1051.15px;font-family:'Liberation Sans', sans-serif;font-size:18.6px;line-height:18.6px;font-weight:400;color:#5b6368;white-space:nowrap;letter-spacing:-0.600px;"><span id="s95">Close Account</span></div>
<div style="position:absolute;left:1688px;top:1112.3px;width:601.7px;height:90.4px;background:#faf7e6;border-bottom:1.5px solid #efefe6;"></div>
<div style="position:absolute;left:1707.5px;top:1133.5px;width:223.3px;height:47.7px;background:#f8f9fa;border:1.5px solid #e1e4e7;border-radius:2px;"></div>
<div id="t96" style="position:absolute;left:1736.9px;top:1148.87px;font-family:'Liberation Sans', sans-serif;font-size:18.23px;line-height:18.23px;font-weight:400;color:#474f55;white-space:nowrap;letter-spacing:-0.600px;"><span id="s96">Make a Test Payment</span></div>
<div id="t97" style="position:absolute;left:1946.9px;top:1135.30px;font-family:'Liberation Sans', sans-serif;font-size:18.54px;line-height:18.54px;font-weight:400;color:#5e6a72;white-space:nowrap;letter-spacing:-0.600px;"><span id="s97"><b style="color:#56626b">Test Mode:</b> Make a test payment to this</span></div>
<div id="t98" style="position:absolute;left:1946.9px;top:1159.72px;font-family:'Liberation Sans', sans-serif;font-size:18.75px;line-height:18.75px;font-weight:400;color:#5e6a72;white-space:nowrap;letter-spacing:-0.420px;"><span id="s98">virtual acocunt.</span></div>
<div style="position:absolute;left:1688px;top:1228.6px;width:602px;height:1.5px;background:#eceeef;"></div>
<div id="t99" style="position:absolute;left:1688px;top:1270.48px;font-family:'Liberation Sans', sans-serif;font-size:17.5px;line-height:17.5px;font-weight:400;color:#6b7176;white-space:nowrap;letter-spacing:-0.085px;"><span id="s99">Payments to this account - 1 payments</span></div>
<div id="t100" style="position:absolute;right:24px;top:1270.48px;font-family:'Liberation Sans', sans-serif;font-size:17.5px;line-height:17.5px;font-weight:400;color:#5a8fe8;white-space:nowrap;letter-spacing:0.085px;"><span id="s100">View All Payments</span></div>
<div style="position:absolute;left:2312.5px;top:0px;width:1.5px;height:1298px;background:#e3e3e3;"></div>
<div style="position:absolute;left:0px;top:1296px;width:2314px;height:2px;background:#e3e3e3;"></div>
</body></html>
